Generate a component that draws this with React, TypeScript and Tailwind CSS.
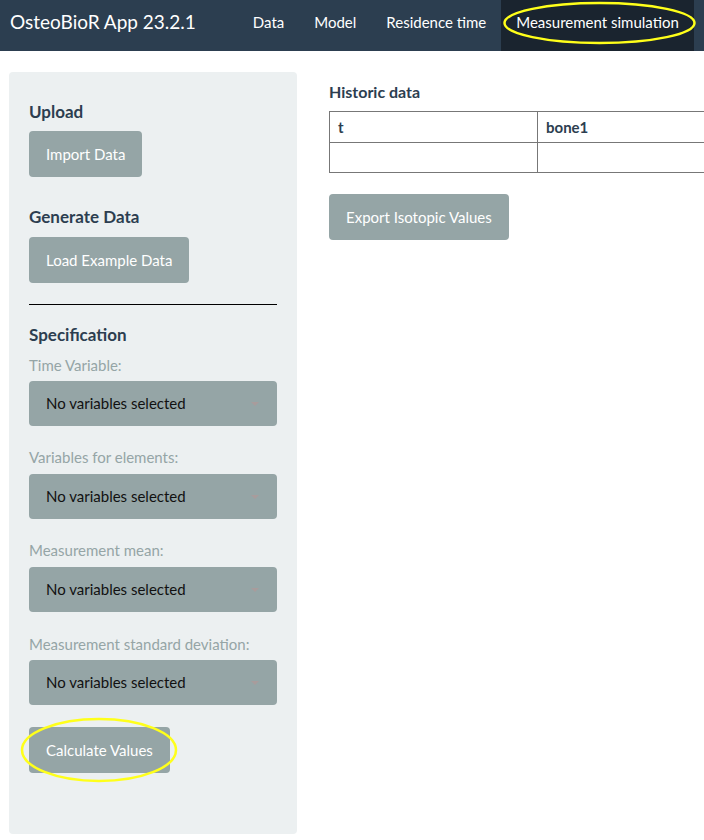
const navItems = ['Data', 'Model', 'Residence time'];

function Select() {
  return (
    <div className="flex h-[45px] w-full items-center justify-between rounded-[4px] bg-[#95a5a6] pl-[17px] pr-[18px] text-[15px] text-[#111]">
      <span>No variables selected</span>
      <span className="h-0 w-0 border-x-[4px] border-t-[4px] border-x-transparent border-t-[#a89c9c]" />
    </div>
  );
}

function Btn({ label }: { label: string }) {
  return (
    <button className="h-[46px] whitespace-nowrap rounded-[4px] bg-[#95a5a6] px-[17px] text-[15px] text-white">
      {label}
    </button>
  );
}

export default function App() {
  return (
    <div className="relative min-h-[840px] overflow-hidden bg-white font-['Lato','Liberation_Sans',sans-serif] text-[#2c3e50]">
      {/* Navbar */}
      <div className="flex h-[51px] items-stretch whitespace-nowrap bg-[#2c3e50] text-white">
        <div className="flex shrink-0 items-center pb-[6px] pl-[10px] pr-[42px] text-[19px]">OsteoBioR App 23.2.1</div>
        {navItems.map((n) => (
          <div key={n} className="flex shrink-0 items-center px-[15px] pb-[6px] text-[15px]">
            {n}
          </div>
        ))}
        <div className="flex shrink-0 items-center bg-[#1a242f] px-[15px] pb-[6px] text-[15px]">Measurement simulation</div>
      </div>

      <div className="flex gap-[32px] pl-[9px] pt-[21px]">
        {/* Sidebar */}
        <div className="flex h-[762px] w-[288px] shrink-0 flex-col rounded-[4px] bg-[#ecf0f1] px-[20px] pt-[29px]">
          <h3 className="text-[17px] font-bold leading-[22px]">Upload</h3>
          <div className="mt-[8px]">
            <Btn label="Import Data" />
          </div>
          <h3 className="mt-[29px] text-[17px] font-bold leading-[22px]">Generate Data</h3>
          <div className="mt-[9px]">
            <Btn label="Load Example Data" />
          </div>
          <hr className="mt-[21px] border-t border-black" />
          <h3 className="mt-[19px] text-[17px] font-bold leading-[22px]">Specification</h3>
          <div className="mt-[9px] text-[15px] leading-[20px] text-[#95a5a6]">Time Variable:</div>
          <div className="mt-[6px]">
            <Select />
          </div>
          <div className="mt-[21px] text-[15px] leading-[20px] text-[#95a5a6]">Variables for elements:</div>
          <div className="mt-[7px]">
            <Select />
          </div>
          <div className="mt-[21px] text-[15px] leading-[20px] text-[#95a5a6]">Measurement mean:</div>
          <div className="mt-[7px]">
            <Select />
          </div>
          <div className="mt-[22px] text-[15px] leading-[20px] text-[#95a5a6]">Measurement standard deviation:</div>
          <div className="mt-[6px]">
            <Select />
          </div>
          <div className="mt-[22px]">
            <Btn label="Calculate Values" />
          </div>
        </div>

        {/* Main */}
        <div className="flex min-w-0 flex-1 flex-col pt-[10px]">
          <h4 className="text-[16px] font-bold leading-[20px]">Historic data</h4>
          <table className="mt-[9px] w-[416px] shrink-0 border-collapse text-[15px]">
            <tbody>
              <tr className="h-[31px]">
                <td className="w-[208px] border border-[#777] px-[8px] font-bold">t</td>
                <td className="border border-[#777] px-[8px] font-bold">bone1</td>
              </tr>
              <tr className="h-[30px]">
                <td className="border border-[#777]" />
                <td className="border border-[#777]" />
              </tr>
            </tbody>
          </table>
          <div className="mt-[21px]">
            <Btn label="Export Isotopic Values" />
          </div>
        </div>
      </div>

      {/* Annotation ellipses */}
      <svg className="pointer-events-none absolute left-0 top-0" width="704" height="840">
        <ellipse cx="599.5" cy="23" rx="95" ry="20" fill="none" stroke="#ffff1a" strokeWidth="2.5" />
        <ellipse cx="99" cy="750" rx="77" ry="31" fill="none" stroke="#ffff1a" strokeWidth="2.5" />
      </svg>
    </div>
  );
}
